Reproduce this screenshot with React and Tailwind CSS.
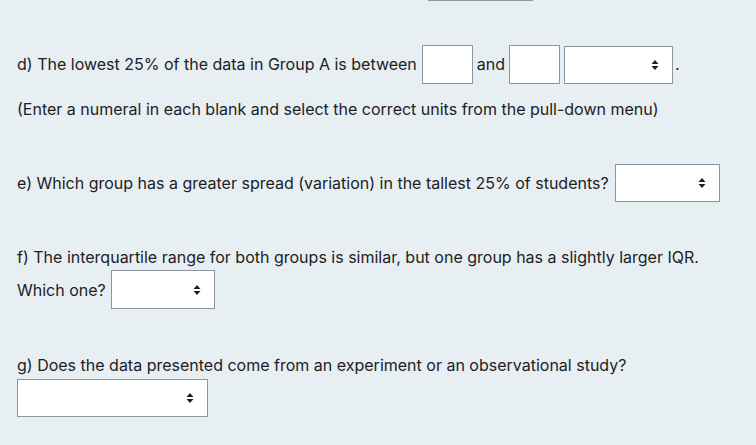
import React from 'react';

function Arrows() {
  return (
    <svg width="8" height="12" viewBox="0 0 8 12" className="shrink-0">
      <path d="M4 1 L7.5 5 L0.5 5 Z" fill="#1d2125" />
      <path d="M4 11 L7.5 7 L0.5 7 Z" fill="#1d2125" />
    </svg>
  );
}

function Select({ className }) {
  return (
    <div
      className={`flex items-center justify-end pr-[13px] bg-white border border-[#8f959e] box-border ${className}`}
    >
      <Arrows />
    </div>
  );
}

function Blank({ className }) {
  return <div className={`bg-white border border-[#8f959e] box-border ${className}`} />;
}

export default function App() {
  return (
    <div
      className="w-[756px] h-[445px] bg-[#e7eff2] text-[#1d2125] text-[16px] leading-[24px] overflow-hidden"
      style={{ fontFamily: 'Inter, "Liberation Sans", Arial, sans-serif' }}
    >
      <div className="ml-[428px] w-[105px] h-px bg-[#8f959e]" />

      <div className="pl-[17px]">
        {/* d */}
        <div className="mt-[43px] flex items-center h-[40px]">
          <span>d) The lowest 25% of the data in Group A is between</span>
          <Blank className="ml-[5px] w-[51px] h-[39px]" />
          <span className="ml-[4px]">and</span>
          <Blank className="ml-[4px] w-[51px] h-[39px]" />
          <Select className="ml-[4px] w-[109px] h-[38px] mt-[1px]" />
          <span className="ml-[2px]">.</span>
        </div>
        <p className="mt-[13px]">
          (Enter a numeral in each blank and select the correct units from the pull-down menu)
        </p>

        {/* e */}
        <div className="mt-[43px] flex items-center h-[38px]">
          <span>e) Which group has a greater spread (variation) in the tallest 25% of students?</span>
          <Select className="ml-[6px] w-[105px] h-[38px]" />
        </div>

        {/* f */}
        <p className="mt-[43px]">
          f) The interquartile range for both groups is similar, but one group has a slightly larger IQR.
        </p>
        <div className="mt-[1px] flex items-center h-[39px]">
          <span>Which one?</span>
          <Select className="ml-[5px] w-[104px] h-[39px]" />
        </div>

        {/* g */}
        <p className="mt-[44px]">
          g) Does the data presented come from an experiment or an observational study?
        </p>
        <Select className="mt-[2px] w-[191px] h-[38px]" />
      </div>
    </div>
  );
}
